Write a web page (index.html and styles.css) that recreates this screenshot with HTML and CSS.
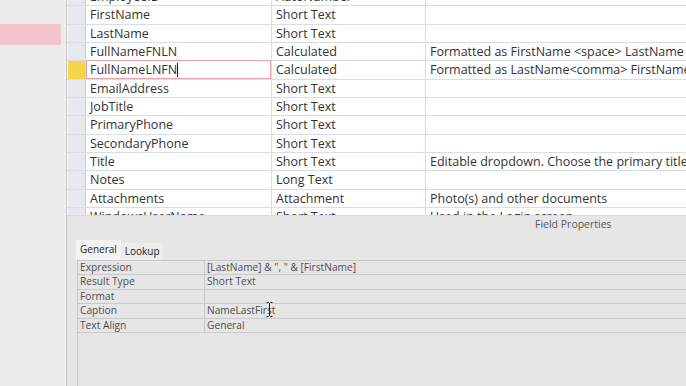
FILE: index.html
```html
<!DOCTYPE html>
<html>
<head>
    <meta charset="utf-8" />
    <title>Employees : Table</title>
    <link rel="stylesheet" href="styles.css">
</head>
<body>
    <div class="app">
        <aside class="nav">
            <div class="nav-item selected"></div>
        </aside>
        <main class="design">
            <div class="grid">
                <div class="grid-body">
                    <div class="row"><span class="sel"></span><span class="cell name">EmployeeID</span><span class="cell type">AutoNumber</span><span class="cell desc"></span></div>
                    <div class="row"><span class="sel"></span><span class="cell name">FirstName</span><span class="cell type">Short Text</span><span class="cell desc"></span></div>
                    <div class="row"><span class="sel"></span><span class="cell name">LastName</span><span class="cell type">Short Text</span><span class="cell desc"></span></div>
                    <div class="row"><span class="sel"></span><span class="cell name">FullNameFNLN</span><span class="cell type">Calculated</span><span class="cell desc">Formatted as FirstName &lt;space&gt; LastName</span></div>
                    <div class="row current"><span class="sel"></span><span class="cell name editing">FullNameLNFN<span class="caret"></span></span><span class="cell type">Calculated</span><span class="cell desc">Formatted as LastName&lt;comma&gt; FirstName</span></div>
                    <div class="row"><span class="sel"></span><span class="cell name">EmailAddress</span><span class="cell type">Short Text</span><span class="cell desc"></span></div>
                    <div class="row"><span class="sel"></span><span class="cell name">JobTitle</span><span class="cell type">Short Text</span><span class="cell desc"></span></div>
                    <div class="row"><span class="sel"></span><span class="cell name">PrimaryPhone</span><span class="cell type">Short Text</span><span class="cell desc"></span></div>
                    <div class="row"><span class="sel"></span><span class="cell name">SecondaryPhone</span><span class="cell type">Short Text</span><span class="cell desc"></span></div>
                    <div class="row"><span class="sel"></span><span class="cell name">Title</span><span class="cell type">Short Text</span><span class="cell desc">Editable dropdown. Choose the primary title</span></div>
                    <div class="row"><span class="sel"></span><span class="cell name">Notes</span><span class="cell type">Long Text</span><span class="cell desc"></span></div>
                    <div class="row"><span class="sel"></span><span class="cell name">Attachments</span><span class="cell type">Attachment</span><span class="cell desc">Photo(s) and other documents</span></div>
                    <div class="row"><span class="sel"></span><span class="cell name">WindowsUserName</span><span class="cell type">Short Text</span><span class="cell desc">Used in the Login screen</span></div>
                </div>
            </div>
            <section class="props">
                <div class="props-title">Field Properties</div>
                <div class="tabs">
                    <span class="tab active">General</span>
                    <span class="tab">Lookup</span>
                </div>
                <div class="tab-panel">
                    <div class="prop-row"><span class="prop-label">Expression</span><span class="prop-value">[LastName] &amp; ", " &amp; [FirstName]</span></div>
                    <div class="prop-row"><span class="prop-label">Result Type</span><span class="prop-value">Short Text</span></div>
                    <div class="prop-row"><span class="prop-label">Format</span><span class="prop-value"></span></div>
                    <div class="prop-row"><span class="prop-label">Caption</span><span class="prop-value">NameLastFirst</span></div>
                    <div class="prop-row"><span class="prop-label">Text Align</span><span class="prop-value">General</span></div>
                </div>
                <!-- mouse pointer over the Caption value -->
                <svg class="ibeam" width="7" height="15" viewBox="0 0 7 15">
                    <path d="M0.5 0.5h2.2M4.3 0.5h2.2M3.5 1v13M0.5 14.5h2.2M4.3 14.5h2.2" stroke="#222" stroke-width="1" fill="none"/>
                </svg>
            </section>
        </main>
    </div>
</body>
</html>
```

FILE: styles.css
```css
body {
    margin: 0;
    padding: 0;
    width: 686px;
    height: 386px;
    overflow: hidden;
    font-family: "Open Sans", "Noto Sans", sans-serif;
    color: #333;
}
.app {
    display: flex;
    height: 386px;
}
.nav {
    width: 67px;
    flex-shrink: 0;
    background-color: #ebebeb;
    border-right: 1px solid #bdbdbd;
    box-shadow: inset -1px 0 0 #f7f7f7;
    padding-top: 24px;
    box-sizing: border-box;
}
.nav-item {
    height: 21px;
    margin-right: 5px;
}
.nav-item.selected {
    background-color: #f5c4cc;
}
.design {
    flex: 1;
    display: flex;
    flex-direction: column;
    min-width: 0;
}
.grid {
    height: 215px;
    overflow: hidden;
    background-color: #fff;
    flex-shrink: 0;
}
.grid-body {
    margin-top: -12px; /* first row scrolled out of view */
}
.row {
    display: flex;
    height: 18.33px;
    box-sizing: border-box;
    border-bottom: 1px solid #d9dee5;
    font-size: 12.5px;
    line-height: 17px;
}
.sel {
    width: 17px;
    flex-shrink: 0;
    background-color: #e5e9ee;
    border-right: 1px solid #cdd3db;
    margin-left: 1px;
}
.current .sel {
    background-color: #f6d54b;
}
.cell {
    padding-left: 4px;
    white-space: nowrap;
    overflow: hidden;
    box-sizing: border-box;
    border-right: 1px solid #d9dee5;
}
.name {
    width: 186px;
    flex-shrink: 0;
}
.type {
    width: 154px;
    flex-shrink: 0;
}
.desc {
    flex: 1;
    border-right: none;
}
.editing {
    box-shadow: inset 0 0 0 1px #eaa3ad;
    margin-top: -1px;
    height: 18.33px;
    padding-top: 1px;
}
.caret {
    display: inline-block;
    width: 1px;
    height: 14px;
    background-color: #111;
    vertical-align: -3px;
}
.props {
    flex: 1;
    background-color: #e6e6e6;
    display: flex;
    flex-direction: column;
    position: relative;
    border-top: 1px solid #dcdcdc;
}
.props-title {
    height: 24px;
    padding-left: 468px;
    font-size: 10.5px;
    line-height: 14px;
    padding-top: 1px;
    box-sizing: border-box;
    color: #5a5a5a;
}
.tabs {
    display: flex;
    align-items: flex-end;
    margin-left: 9px;
    height: 20px;
}
.tab {
    font-size: 10px;
    color: #222;
    padding: 0 3px;
    height: 17px;
    line-height: 17px;
    background-color: #ededed;
}
.tab.active {
    height: 20px;
    line-height: 18px;
    background-color: #f3f3f3;
    padding: 0 4px;
}
.tab + .tab {
    margin-left: 1px;
}
.tab-panel {
    flex: 1;
    margin-left: 10px;
    border-left: 1px solid #c6c6c6;
    border-top: 1px solid #c6c6c6;
}
.prop-row {
    display: flex;
    height: 14.4px;
    box-sizing: border-box;
    border-bottom: 1px solid #c9c9c9;
    font-size: 10.2px;
    line-height: 13px;
    color: #4d4d4d;
}
.prop-label {
    width: 127px;
    flex-shrink: 0;
    padding-left: 2px;
    border-right: 1px solid #c9c9c9;
    box-sizing: border-box;
}
.prop-value {
    padding-left: 2px;
    white-space: nowrap;
}
.ibeam {
    position: absolute;
    left: 199px;
    top: 86px;
}
```
